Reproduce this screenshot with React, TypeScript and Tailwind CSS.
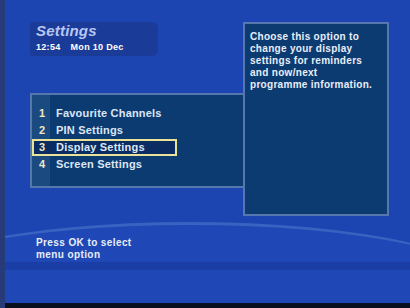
import React from 'react';

const menuItems = [
  { num: '1', label: 'Favourite Channels' },
  { num: '2', label: 'PIN Settings' },
  { num: '3', label: 'Display Settings' },
  { num: '4', label: 'Screen Settings' },
];

export default function App() {
  const selected = 2;

  return (
    <div
      className="relative w-[410px] h-[308px] overflow-hidden bg-[#1d45b2] flex"
      style={{ fontFamily: '"Liberation Sans", Arial, sans-serif' }}
    >
      {/* Background swoosh */}
      <div className="absolute left-[-120px] top-[222px] w-[620px] h-[140px] rounded-[50%] border-t-[3px] border-[#3a62c0] bg-[#1f48b6] pointer-events-none" />
      <div className="absolute left-0 top-[262px] w-full h-[8px] bg-[#1a3ea6] pointer-events-none" />

      {/* Left dark edge */}
      <div className="relative w-[5px] h-full bg-[#263b78] shrink-0" />

      <div className="relative flex flex-col flex-1">
        <div className="flex pt-[22px] pl-[25px]">
          {/* Left column */}
          <div className="flex flex-col w-[213px]">
            <div className="w-[128px] h-[34px] rounded-r-[6px] rounded-l-[3px] bg-[#1a3c98] pl-[6px] pt-[1px] leading-none">
              <div className="text-[15px] italic font-bold text-[#b9c6f2] tracking-[0.2px]">Settings</div>
              <div className="mt-[5px] text-[9px] font-bold text-white flex gap-[10px] tracking-[0.3px]">
                <span>12:54</span>
                <span>Mon 10 Dec</span>
              </div>
            </div>

            <div className="mt-[37px] h-[95px] flex border-y-2 border-l-2 border-[#5577ad] bg-[#0c3b72]">
              <div className="w-[18px] bg-[#1b4a80]" />
              <div className="flex flex-col pt-[10px] -ml-[18px] w-full">
                {menuItems.map((item, idx) => (
                  <div
                    key={item.num}
                    className={`flex items-center h-[17px] w-[145px] text-[11px] font-bold leading-none tracking-[0.2px] ${
                      idx === selected ? 'border-2 border-[#e9e39a] bg-[#0a2c62]' : 'border-2 border-transparent'
                    }`}
                  >
                    <span className="w-[22px] pl-[5px] text-[#f0e8c0]">{item.num}</span>
                    <span className="text-[#dde6f4]">{item.label}</span>
                  </div>
                ))}
              </div>
            </div>
          </div>

          {/* Info panel */}
          <div className="w-[146px] h-[194px] border-2 border-[#5577ad] bg-[#0c3b72] pl-[5px] pt-[7px]">
            <p className="text-[10px] font-bold leading-[12px] text-[#e8eef8] tracking-[0.3px]">
              Choose this option to
              <br />
              change your display
              <br />
              settings for reminders
              <br />
              and now/next
              <br />
              programme information.
            </p>
          </div>
        </div>

        <div className="mt-[21px] pl-[31px] text-[10px] font-bold leading-[12px] text-[#e8eef8] tracking-[0.4px]">
          Press OK to select
          <br />
          menu option
        </div>

        <div className="flex-1" />
        <div className="h-[5px] bg-[#0a0f1e]" />
      </div>
    </div>
  );
}
